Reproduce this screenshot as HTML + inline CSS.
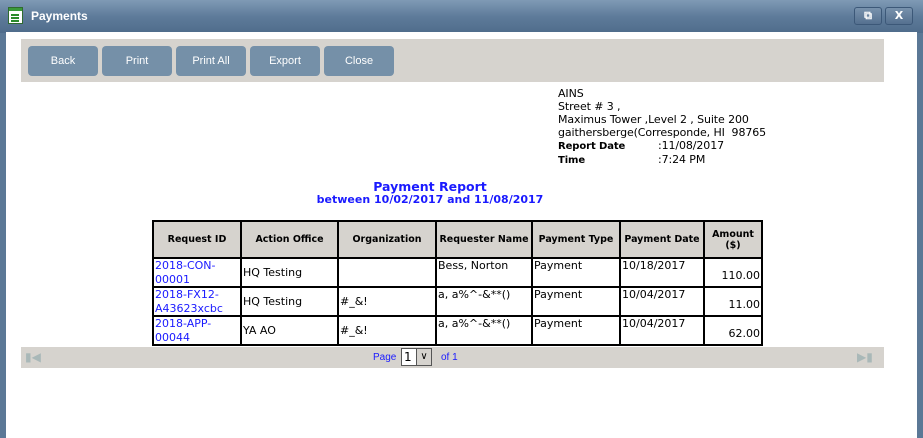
<!DOCTYPE html>
<html><head><meta charset="utf-8"><style>
*{margin:0;padding:0;box-sizing:border-box}
body{width:923px;height:438px;overflow:hidden;background:#5b7896;font-family:"DejaVu Sans","Liberation Sans",sans-serif;position:relative}
.title{position:absolute;left:0;top:0;width:923px;height:33px;background:linear-gradient(#7f9ab5,#5e7b9a 50%,#4f6c8b)}
.title .t{position:absolute;left:31px;top:9px;color:#fff;font-weight:bold;font-size:12px;font-family:"Liberation Sans",sans-serif}
.ic{position:absolute;left:8px;top:7px;width:15px;height:17px;background:#fff;border:1px solid #2f6b2f}
.ic:before{content:"";position:absolute;left:0;top:0;width:13px;height:3px;background:#3a9a3a}
.ic i{position:absolute;left:2px;height:2px;width:8px;background:#2a8a2a}
.wb{position:absolute;top:7px;width:28px;height:18px;border:1px solid #3c5878;border-radius:3px;background:linear-gradient(#7892ad,#55708f);color:#fff;font-weight:bold;font-size:11px;text-align:center;line-height:16px}
.content{position:absolute;left:6px;top:32px;width:911px;height:406px;background:#fff}
.bar{position:absolute;left:21px;top:39px;width:863px;height:43px;background:#d6d3ce}
.btn{position:absolute;top:46px;width:70px;height:30px;background:#7590a8;border-radius:4px;color:#fff;font-size:11px;text-align:center;line-height:30px;font-family:"Liberation Sans",sans-serif}
.addr{position:absolute;left:558px;top:87px;font-size:11px;line-height:13px;color:#000;letter-spacing:-0.1px}
.addr b{font-size:10px;display:inline-block;width:100px}
.rt{position:absolute;left:0;width:860px;text-align:center;color:#1a1aff;font-weight:bold}
table{position:absolute;left:152px;top:220px;border-collapse:collapse;border:2px solid #000;font-size:11px;table-layout:fixed;width:609px}
td,th{border:2px solid #000;padding:0 1px;vertical-align:top;white-space:nowrap;overflow:hidden}
th{background:#d6d3ce;font-size:9.5px;height:37px;vertical-align:middle;text-align:center}
td{height:27px;line-height:13.5px}
td.am{text-align:right;vertical-align:middle;padding-top:6px}
td a{color:#1a1aff;text-decoration:none}
.pg{position:absolute;left:21px;top:347px;width:863px;height:21px;background:#d6d3ce}
</style></head><body>
<div class="title"><div class="ic"><i style="top:6px"></i><i style="top:9px"></i><i style="top:12px"></i></div><div class="t">Payments</div>
<div class="wb" style="left:854px">&#10697;</div><div class="wb" style="left:885px">X</div></div>
<div class="content"></div>
<div class="bar"></div>
<div class="btn" style="left:28px">Back</div>
<div class="btn" style="left:102px">Print</div>
<div class="btn" style="left:176px">Print All</div>
<div class="btn" style="left:250px">Export</div>
<div class="btn" style="left:324px">Close</div>
<div class="addr">AINS<br>Street # 3 ,<br>Maximus Tower ,Level 2 , Suite 200<br>gaithersberge(Corresponde, HI&nbsp; 98765<br><b>Report Date</b>:11/08/2017<br><b>Time</b>:7:24 PM</div>
<div class="rt" style="top:179px;font-size:12.5px">Payment Report</div>
<div class="rt" style="top:193px;font-size:11px">between 10/02/2017 and 11/08/2017</div>
<table>
<colgroup><col style="width:88px"><col style="width:97px"><col style="width:98px"><col style="width:96px"><col style="width:88px"><col style="width:84px"><col style="width:58px"></colgroup>
<tr><th>Request ID</th><th>Action Office</th><th>Organization</th><th>Requester Name</th><th>Payment Type</th><th>Payment Date</th><th>Amount<br>($)</th></tr>
<tr><td><a>2018-CON-<br>00001</a></td><td style="vertical-align:middle">HQ Testing</td><td></td><td>Bess, Norton</td><td>Payment</td><td>10/18/2017</td><td class="am">110.00</td></tr>
<tr><td><a>2018-FX12-<br>A43623xcbc</a></td><td style="vertical-align:middle">HQ Testing</td><td style="vertical-align:middle">#_&amp;!</td><td>a, a%^-&amp;**()</td><td>Payment</td><td>10/04/2017</td><td class="am">11.00</td></tr>
<tr><td><a>2018-APP-<br>00044</a></td><td style="vertical-align:middle">YA AO</td><td style="vertical-align:middle">#_&amp;!</td><td>a, a%^-&amp;**()</td><td>Payment</td><td>10/04/2017</td><td class="am">62.00</td></tr>
</table>
<div class="pg">
<span style="position:absolute;left:4px;top:3px;color:#a9b8b8;font-size:12px">&#9646;&#9664;</span>
<span style="position:absolute;left:352px;top:5px;color:#1a1aff;font-size:10px;font-family:'Liberation Sans',sans-serif">Page</span>
<span style="position:absolute;left:380px;top:1px;width:31px;height:18px;border:1px solid #555;background:#fff;font-size:12px;line-height:16px;padding-left:2px">1<span style="position:absolute;right:0;top:0;width:15px;height:16px;background:#d6d3ce;border-left:1px solid #555;text-align:center;font-size:10px">&#8744;</span></span>
<span style="position:absolute;left:420px;top:5px;color:#1a1aff;font-size:10px;font-family:'Liberation Sans',sans-serif">of 1</span>
<span style="position:absolute;left:836px;top:3px;color:#a9b8b8;font-size:12px">&#9654;&#9646;</span>
</div>
</body></html>
